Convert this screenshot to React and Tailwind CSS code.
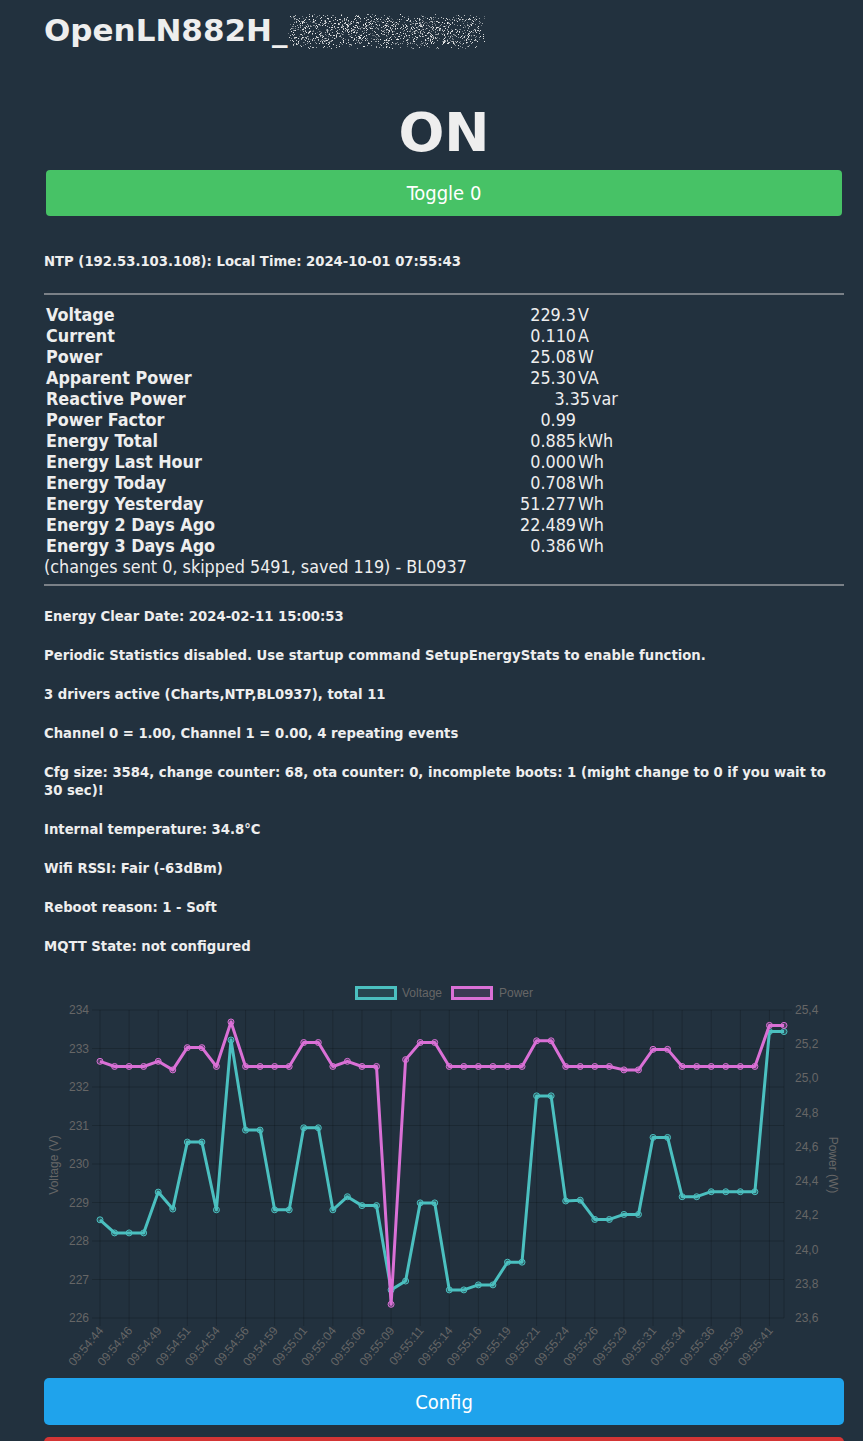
import React, { useMemo } from 'react';

const voltage = [
  228.55, 228.21, 228.21, 228.21, 229.27, 228.83, 230.57, 230.57, 228.81, 233.22,
  230.88, 230.88, 228.81, 228.81, 230.94, 230.94, 228.81, 229.15, 228.92, 228.92,
  226.73, 226.96, 228.99, 228.99, 226.73, 226.73, 226.86, 226.86, 227.45, 227.45,
  231.77, 231.77, 229.04, 229.06, 228.56, 228.56, 228.69, 228.69, 230.69, 230.69,
  229.15, 229.15, 229.28, 229.28, 229.28, 229.28, 233.44, 233.44,
];

const power = [
  25.1, 25.07, 25.07, 25.07, 25.1, 25.05, 25.18, 25.18, 25.07, 25.33,
  25.07, 25.07, 25.07, 25.07, 25.21, 25.21, 25.07, 25.1, 25.07, 25.07,
  23.68, 25.11, 25.21, 25.21, 25.07, 25.07, 25.07, 25.07, 25.07, 25.07,
  25.22, 25.22, 25.07, 25.07, 25.07, 25.07, 25.05, 25.05, 25.17, 25.17,
  25.07, 25.07, 25.07, 25.07, 25.07, 25.07, 25.31, 25.31,
];

const times = [
  '09:54:44', '09:54:46', '09:54:49', '09:54:51', '09:54:54', '09:54:56', '09:54:59', '09:55:01',
  '09:55:04', '09:55:06', '09:55:09', '09:55:11', '09:55:14', '09:55:16', '09:55:19', '09:55:21',
  '09:55:24', '09:55:26', '09:55:29', '09:55:31', '09:55:34', '09:55:36', '09:55:39', '09:55:41',
];

const readings = [
  ['Voltage', '229.3', 'V'],
  ['Current', '0.110', 'A'],
  ['Power', '25.08', 'W'],
  ['Apparent Power', '25.30', 'VA'],
  ['Reactive Power', '3.35', 'var', true],
  ['Power Factor', '0.99', ''],
  ['Energy Total', '0.885', 'kWh'],
  ['Energy Last Hour', '0.000', 'Wh'],
  ['Energy Today', '0.708', 'Wh'],
  ['Energy Yesterday', '51.277', 'Wh'],
  ['Energy 2 Days Ago', '22.489', 'Wh'],
  ['Energy 3 Days Ago', '0.386', 'Wh'],
];

const infoLines = [
  'Energy Clear Date: 2024-02-11 15:00:53',
  'Periodic Statistics disabled. Use startup command SetupEnergyStats to enable function.',
  '3 drivers active (Charts,NTP,BL0937), total 11',
  'Channel 0 = 1.00, Channel 1 = 0.00, 4 repeating events',
  'Cfg size: 3584, change counter: 68, ota counter: 0, incomplete boots: 1 (might change to 0 if you wait to 30 sec)!',
  'Internal temperature: 34.8°C',
  'Wifi RSSI: Fair (-63dBm)',
  'Reboot reason: 1 - Soft',
  'MQTT State: not configured',
];

const TEAL = '#4bc0c0';
const PINK = '#da70d6';
const AXIS = '#666';

const px = (i) => 100 + i * (684 / 47);
const vy = (v) => 1010 + (234 - v) * 38.5;
const py = (p) => 1010 + ((25.4 - p) * 308) / 1.8;

// blurred-out device id next to the title
const Scramble = () => {
  const dots = useMemo(() => {
    let seed = 7;
    const rnd = () => {
      seed = (seed * 1103515245 + 12345) % 2147483648;
      return seed / 2147483648;
    };
    const out = [];
    for (let k = 0; k < 1800; k++) {
      const x = rnd() * 196;
      const y = 4 + rnd() * 34;
      const edge = Math.min(x, 196 - x, y - 4, 38 - y);
      if (edge < 4 && rnd() > 0.35) continue;
      out.push({ x: Math.round(x), y: Math.round(y), o: 0.25 + rnd() * 0.75 });
    }
    return out;
  }, []);
  return (
    <svg width="198" height="40" viewBox="0 0 198 40" className="block">
      {dots.map((d, k) => (
        <rect key={k} x={d.x} y={d.y} width="1" height="1" fill="#f2f2f2" opacity={d.o} />
      ))}
    </svg>
  );
};

const Series = ({ data, toY, color }) => {
  const pts = data.map((v, i) => `${px(i).toFixed(1)},${toY(v).toFixed(1)}`).join(' ');
  return (
    <g>
      <polyline points={pts} fill="none" stroke={color} strokeWidth="3" strokeLinejoin="round" />
      {data.map((v, i) => (
        <circle key={i} cx={px(i)} cy={toY(v)} r="3" fill={color} fillOpacity="0.25" stroke={color} strokeWidth="1" />
      ))}
    </g>
  );
};

const Chart = () => {
  const leftTicks = [234, 233, 232, 231, 230, 229, 228, 227, 226];
  const rightTicks = ['25,4', '25,2', '25,0', '24,8', '24,6', '24,4', '24,2', '24,0', '23,8', '23,6'];
  return (
    <svg width="800" height="397" viewBox="44 975 800 397" className="block" fontFamily="'Liberation Sans', Arial, sans-serif">
      {/* legend */}
      <rect x="356.5" y="987.5" width="39" height="11" fill="rgba(75,192,192,0.15)" stroke={TEAL} strokeWidth="3" />
      <text x="402" y="997" fontSize="12" fill={AXIS}>Voltage</text>
      <rect x="452.5" y="987.5" width="39" height="11" fill="rgba(218,112,214,0.15)" stroke={PINK} strokeWidth="3" />
      <text x="499" y="997" fontSize="12" fill={AXIS}>Power</text>

      {/* grid */}
      {leftTicks.map((t, k) => (
        <line key={t} x1="92" x2="784" y1={1010 + k * 38.5} y2={1010 + k * 38.5} stroke="rgba(0,0,0,0.18)" strokeWidth="1" />
      ))}
      {times.map((t, k) => (
        <line key={t} x1={px(k * 2)} x2={px(k * 2)} y1="1010" y2="1326" stroke="rgba(0,0,0,0.18)" strokeWidth="1" />
      ))}
      <line x1="784" x2="784" y1="1010" y2="1318" stroke="rgba(0,0,0,0.18)" />
      <line x1="784" x2="792" y1="1010" y2="1010" stroke="rgba(0,0,0,0.18)" />

      {/* left axis */}
      {leftTicks.map((t, k) => (
        <text key={t} x="89" y={1014 + k * 38.5} fontSize="12" fill={AXIS} textAnchor="end">{t}</text>
      ))}
      <text transform="translate(58 1165) rotate(-90)" fontSize="12" fill={AXIS} textAnchor="middle">Voltage (V)</text>

      {/* right axis */}
      {rightTicks.map((t, k) => (
        <text key={t} x="795" y={1014 + k * (308 / 9)} fontSize="12" fill={AXIS}>{t}</text>
      ))}
      <text transform="translate(829 1165) rotate(90)" fontSize="12" fill={AXIS} textAnchor="middle">Power (W)</text>

      {/* x axis labels */}
      {times.map((t, k) => (
        <text key={t} transform={`translate(${px(k * 2) + 4} 1331) rotate(-50)`} fontSize="12" fill={AXIS} textAnchor="end">{t}</text>
      ))}

      <Series data={voltage} toY={vy} color={TEAL} />
      <Series data={power} toY={py} color={PINK} />
    </svg>
  );
};

export default function App() {
  return (
    <div className="min-h-screen bg-[#22313e] text-[#eeeeee] font-['DejaVu_Sans_Condensed','DejaVu_Sans',sans-serif]">
      <div className="pl-[44px] pr-[19px]">
        <div className="flex items-center pt-[10px]">
          <h2 className="font-['DejaVu_Sans',sans-serif] font-bold text-[31px] leading-[40px]">OpenLN882H_</h2>
          <Scramble />
        </div>

        <div className="mt-[56px] text-center font-['DejaVu_Sans',sans-serif] font-bold text-[54px] leading-[54px]">ON</div>

        <button className="mt-[10px] mx-[2px] w-[796px] h-[46px] rounded-[4px] bg-[#47c266] text-[20px] text-white">
          Toggle 0
        </button>

        <p className="mt-[36px] text-[14.7px] leading-[18px] font-bold">
          NTP (192.53.103.108): Local Time: 2024-10-01 07:55:43
        </p>

        <hr className="mt-[23px] border-0 h-[2px] bg-[#7a8087]" />

        <div className="mt-[9px] text-[17.8px] leading-[21px]">
          {readings.map(([label, value, unit, wide]) => (
            <div key={label} className="flex">
              <div className="w-[476px] pl-[2px] font-bold">{label}</div>
              <div className={`${wide ? 'w-[70px]' : 'w-[56px]'} text-right`}>{value}</div>
              <div className="pl-[2px]">{unit}</div>
            </div>
          ))}
          <div>(changes sent 0, skipped 5491, saved 119) - BL0937</div>
        </div>

        <hr className="mt-[7px] border-0 h-[2px] bg-[#7a8087]" />

        <div className="mt-[21px] flex flex-col gap-[21px] text-[14.7px] leading-[18px] font-bold">
          {infoLines.map((line) => (
            <p key={line}>{line}</p>
          ))}
        </div>

        <div className="mt-[20px]">
          <Chart />
        </div>

        <button className="mt-[6px] w-full h-[47px] rounded-[5px] bg-[#1fa3ec] text-[20px] text-white">Config</button>
        <button className="mt-[12px] mb-[20px] w-full h-[47px] rounded-[5px] bg-[#d43535] text-[20px] text-white">Restart</button>
      </div>
    </div>
  );
}
